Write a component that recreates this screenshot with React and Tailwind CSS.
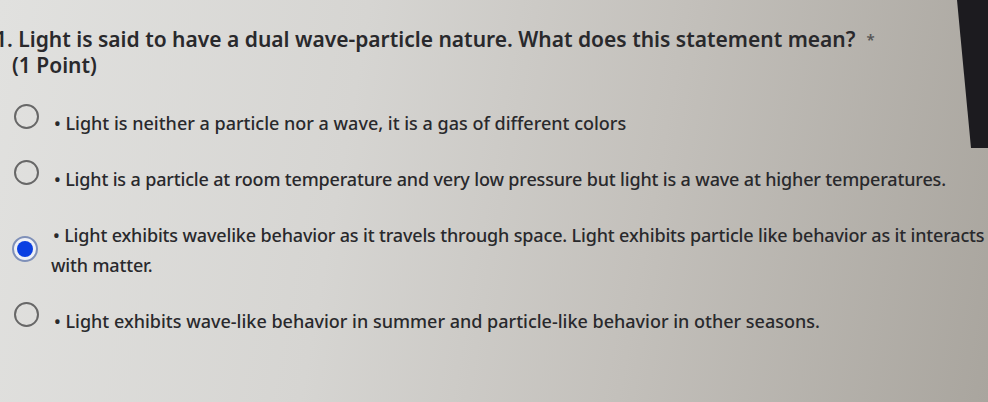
const OPTIONS = [
  { id: 'a', text: 'Light is neither a particle nor a wave, it is a gas of different colors' },
  {
    id: 'b',
    text: 'Light is a particle at room temperature and very low pressure but light is a wave at higher temperatures.',
    tight: true,
  },
  {
    id: 'c',
    text: 'Light exhibits wavelike behavior as it travels through space. Light exhibits particle like behavior as it interacts',
    more: 'with matter.',
    checked: true,
    tight: true,
  },
  { id: 'd', text: 'Light exhibits wave-like behavior in summer and particle-like behavior in other seasons.' },
]

function Radio({ checked }) {
  if (checked) {
    return (
      <span className="flex items-center justify-center w-[26px] h-[26px] rounded-full border-2 border-[#7f90b8] bg-[#eef0f6] shrink-0">
        <span className="block w-[16px] h-[16px] rounded-full bg-[#0a3fe2]" />
      </span>
    )
  }
  return <span className="block w-[25px] h-[25px] rounded-full border-2 border-[#676767] shrink-0" />
}

export default function App() {
  return (
    <div
      className="relative w-[988px] h-[402px] overflow-hidden bg-[linear-gradient(100deg,#e1e1df_0%,#d6d5d2_35%,#c3c0bb_65%,#a9a59e_100%)] text-[#29292c]"
      style={{ fontFamily: '"Noto Sans", "Open Sans", sans-serif' }}
    >
      <div className="pt-[26px] pl-[12px]">
        <p className="text-[21px] leading-[26px] font-semibold -ml-[17px] whitespace-nowrap">
          1. Light is said to have a dual wave-particle nature. What does this statement mean?
          <span className="ml-[11px] text-[#555] text-[15px] align-top">*</span>
        </p>
        <p className="text-[21px] leading-[26px] font-semibold">(1 Point)</p>

        <ul className="mt-[30px] flex flex-col gap-[26px]">
          {OPTIONS.map(o => (
            <li key={o.id} className="flex items-start gap-[15px]">
              <span className={o.checked ? 'pt-[16px]' : 'pl-[2px] -mt-[4px]'}>
                <Radio checked={o.checked} />
              </span>
              <div
                className={`text-[18px] leading-[30px] font-medium whitespace-nowrap ${o.tight ? 'tracking-[-0.16px]' : ''}`}
              >
                <p>• {o.text}</p>
                {o.more && <p className="-ml-[2px]">{o.more}</p>}
              </div>
            </li>
          ))}
        </ul>
      </div>

      <div className="absolute inset-0 bg-[#1c1b1f] [clip-path:polygon(957px_0,988px_0,988px_148px,971px_148px)]" />
    </div>
  )
}
